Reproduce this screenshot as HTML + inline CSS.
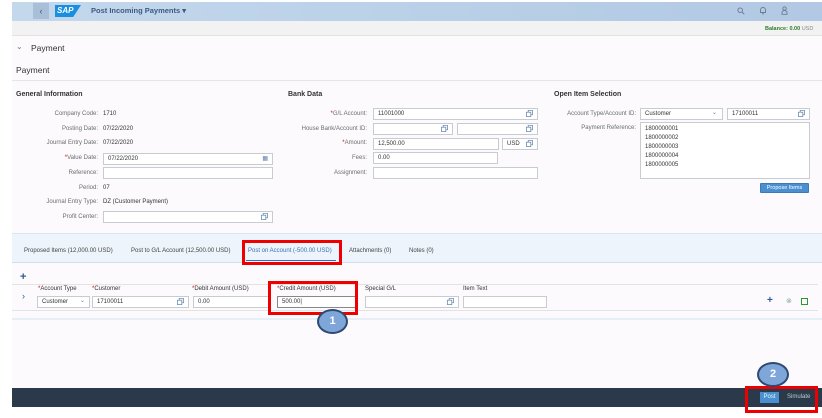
<!DOCTYPE html>
<html><head><meta charset="utf-8">
<style>
*{margin:0;padding:0;box-sizing:border-box}
body{width:822px;height:418px;background:#fff;position:relative;overflow:hidden;font-family:"Liberation Sans",sans-serif;color:#333}
.a{position:absolute;white-space:nowrap}
.l{font-size:6px;color:#6a6d70;text-align:right}
.v{font-size:6px;color:#333}
.in{position:absolute;height:12px;background:#fff;border:1px solid #c8ccd0;font-size:6px;padding:2px 4px;color:#333}
.r{color:#d00}
.t{font-size:7px;font-weight:bold;color:#333}
.red{position:absolute;border:3px solid #e00}
.circ{position:absolute;background:#7fa6d8;border:2px solid #2e4a73;border-radius:50%;color:#fff;font-weight:bold;font-size:11px;text-align:center}
.vh{position:absolute;right:4px;top:1px;width:7px;height:7px}
</style></head><body>
<svg width="0" height="0" style="position:absolute"><defs><symbol id="vh" viewBox="0 0 8 8"><rect x="0.5" y="2.5" width="5" height="5" fill="none" stroke="#5a7fa8" stroke-width="0.8"/><path d="M2.5 2.5V0.5H7.5V5.5H5.5" fill="none" stroke="#5a7fa8" stroke-width="0.8"/></symbol></defs></svg>
<!-- header -->
<div class="a" style="left:12px;top:2px;width:810px;height:19px;background:linear-gradient(90deg,#c4d8ec,#b8cfe7 60%,#b2c8e4)"></div>
<div class="a" style="left:33px;top:3px;width:16px;height:16px;background:#a9bfd8;color:#3a5a80;font-size:9px;text-align:center;line-height:16px">&lsaquo;</div>
<div class="a" style="left:55px;top:5px;width:26px;height:12px;background:#1a8fe0;clip-path:polygon(0 0,100% 0,70% 100%,0 100%);color:#fff;font-weight:bold;font-size:8px;line-height:12px;padding-left:2px;font-style:italic">SAP</div>
<div class="a" style="left:91px;top:6px;font-size:7.5px;font-weight:bold;color:#3a5a80">Post Incoming Payments ▾</div>
<svg class="a" style="left:737px;top:7px" width="8" height="8" viewBox="0 0 8 8"><circle cx="3.2" cy="3.2" r="2.3" fill="none" stroke="#6a7c90" stroke-width="0.9"/><path d="M5 5L7.3 7.3" stroke="#6a7c90" stroke-width="0.9"/></svg>
<svg class="a" style="left:759px;top:6px" width="8" height="9" viewBox="0 0 8 9"><path d="M1.5 6.5V4a2.5 2.5 0 0 1 5 0V6.5H1ZM3 7.8h2" fill="none" stroke="#6a7c90" stroke-width="0.9"/></svg>
<svg class="a" style="left:781px;top:6px" width="7" height="9" viewBox="0 0 7 9"><circle cx="3.5" cy="2.5" r="1.7" fill="none" stroke="#6a7c90" stroke-width="0.9"/><path d="M1 8.3V6.5a2.5 2 0 0 1 5 0V8.3Z" fill="none" stroke="#6a7c90" stroke-width="0.9"/></svg>
<!-- subheader -->
<div class="a" style="left:12px;top:21px;width:810px;height:15px;background:#f2f2f2;border-bottom:1px solid #e3e3e3"></div>
<div class="a" style="left:765px;top:26px;font-size:5.5px;font-weight:bold;color:#2b7d2b">Balance: 0.00 <span style="font-weight:normal;color:#888">USD</span></div>
<!-- content bg -->
<div class="a" style="left:12px;top:36px;width:810px;height:352px;background:#fcfafd"></div>
<div class="a" style="left:16px;top:42px;font-size:8px;color:#5a7fa8">&#8964;</div>
<div class="a" style="left:31px;top:43px;font-size:8.5px;color:#333">Payment</div>
<div class="a" style="left:16px;top:65px;font-size:8.5px;color:#333">Payment</div>
<div class="a" style="left:12px;top:80px;width:810px;height:1px;background:#e5e5e8"></div>
<div class="a t" style="left:16px;top:91px">General Information</div>
<div class="a t" style="left:288px;top:91px">Bank Data</div>
<div class="a t" style="left:554px;top:91px">Open Item Selection</div>
<!-- general info -->
<div class="a l" style="right:724px;top:111px">Company Code:</div><div class="a v" style="left:103px;top:111px">1710</div>
<div class="a l" style="right:724px;top:126px">Posting Date:</div><div class="a v" style="left:103px;top:126px">07/22/2020</div>
<div class="a l" style="right:724px;top:140px">Journal Entry Date:</div><div class="a v" style="left:103px;top:140px">07/22/2020</div>
<div class="a l" style="right:724px;top:155px"><span class="r">*</span>Value Date:</div>
<div class="in" style="left:103px;top:153px;width:170px">07/22/2020<span style="position:absolute;right:4px;top:1px;color:#5a7fa8">▦</span></div>
<div class="a l" style="right:724px;top:170px">Reference:</div>
<div class="in" style="left:103px;top:167px;width:170px"></div>
<div class="a l" style="right:724px;top:185px">Period:</div><div class="a v" style="left:103px;top:185px">07</div>
<div class="a l" style="right:724px;top:199px">Journal Entry Type:</div><div class="a v" style="left:103px;top:199px">DZ (Customer Payment)</div>
<div class="a l" style="right:724px;top:214px">Profit Center:</div>
<div class="in" style="left:103px;top:211px;width:170px"><svg class="vh"><use href="#vh"/></svg></div>
<!-- bank -->
<div class="a l" style="right:455px;top:111px"><span class="r">*</span>G/L Account:</div>
<div class="in" style="left:373px;top:108px;width:165px">11001000<svg class="vh"><use href="#vh"/></svg></div>
<div class="a l" style="right:455px;top:126px">House Bank/Account ID:</div>
<div class="in" style="left:373px;top:123px;width:80px"><svg class="vh"><use href="#vh"/></svg></div>
<div class="in" style="left:457px;top:123px;width:81px"><svg class="vh"><use href="#vh"/></svg></div>
<div class="a l" style="right:455px;top:140px"><span class="r">*</span>Amount:</div>
<div class="in" style="left:373px;top:138px;width:126px">12,500.00</div>
<div class="in" style="left:502px;top:138px;width:36px">USD<svg class="vh"><use href="#vh"/></svg></div>
<div class="a l" style="right:455px;top:155px">Fees:</div>
<div class="in" style="left:373px;top:152px;width:125px">0.00</div>
<div class="a l" style="right:455px;top:170px">Assignment:</div>
<div class="in" style="left:373px;top:167px;width:165px"></div>
<!-- open item -->
<div class="a l" style="right:186px;top:111px">Account Type/Account ID:</div>
<div class="in" style="left:640px;top:108px;width:83px">Customer<span style="position:absolute;right:5px;top:0;color:#5a7fa8">&#8964;</span></div>
<div class="in" style="left:727px;top:108px;width:83px">17100011<svg class="vh"><use href="#vh"/></svg></div>
<div class="a l" style="right:186px;top:125px">Payment Reference:</div>
<div class="in" style="left:640px;top:122px;width:170px;height:57px;line-height:9px">1800000001<br>1800000002<br>1800000003<br>1800000004<br>1800000005</div>
<div class="a" style="left:760px;top:183px;width:49px;height:10px;background:#4a90d0;border:1px solid #3a7ab8;color:#fff;font-size:5.5px;text-align:center;line-height:8px;border-radius:1px">Propose Items</div>
<!-- tabs -->
<div class="a" style="left:12px;top:233px;width:810px;height:30px;background:#eef4fb;border-top:1px solid #dde6f0;border-bottom:1px solid #d4dfec"></div>
<div class="a v" style="left:24px;top:248px;color:#444">Proposed Items (12,000.00 USD)</div>
<div class="a v" style="left:131px;top:248px;color:#444">Post to G/L Account (12,500.00 USD)</div>
<div class="a v" style="left:248px;top:248px;color:#3a70b8">Post on Account (-500.00 USD)</div>
<div class="a" style="left:246px;top:260px;width:90px;height:1px;background:#3a70b8"></div>
<div class="a v" style="left:349px;top:248px;color:#444">Attachments (0)</div>
<div class="a v" style="left:409px;top:248px;color:#444">Notes (0)</div>
<!-- table -->
<div class="a" style="left:20px;top:271px;font-size:11px;color:#2e5c94;font-weight:bold">+</div>
<div class="a" style="left:12px;top:284px;width:806px;height:1px;background:#e3e3e3"></div>
<div class="a v" style="left:38px;top:286px"><span class="r">*</span>Account Type</div>
<div class="a v" style="left:92px;top:286px"><span class="r">*</span>Customer</div>
<div class="a v" style="left:192px;top:286px"><span class="r">*</span>Debit Amount (USD)</div>
<div class="a v" style="left:277px;top:286px"><span class="r">*</span>Credit Amount (USD)</div>
<div class="a v" style="left:365px;top:286px">Special G/L</div>
<div class="a v" style="left:463px;top:286px">Item Text</div>
<div class="a" style="left:22px;top:291px;font-size:9px;color:#2e5c94">›</div>
<div class="in" style="left:37px;top:296px;width:53px">Customer<span style="position:absolute;right:4px;top:0;color:#5a7fa8">&#8964;</span></div>
<div class="in" style="left:92px;top:296px;width:97px">17100011<svg class="vh"><use href="#vh"/></svg></div>
<div class="in" style="left:193px;top:296px;width:78px">0.00</div>
<div class="in" style="left:277px;top:296px;width:80px;border-color:#888">500.00|</div>
<div class="in" style="left:365px;top:296px;width:94px"><svg class="vh"><use href="#vh"/></svg></div>
<div class="in" style="left:463px;top:296px;width:84px"></div>
<div class="a" style="left:767px;top:295px;font-size:10px;color:#2e5c94;font-weight:bold">+</div>
<div class="a" style="left:786px;top:297px;font-size:7px;color:#8aa">⊗</div>
<div class="a" style="left:801px;top:298px;width:7px;height:7px;border:1.5px solid #2b9a2b"></div>
<div class="a" style="left:12px;top:310px;width:806px;height:1px;background:#e3e3e3"></div>
<div class="a" style="left:12px;top:318px;width:810px;height:2px;background:#e6eef7"></div>
<!-- footer -->
<div class="a" style="left:12px;top:388px;width:810px;height:19px;background:#2a3a4a"></div>
<div class="a" style="left:760px;top:392px;width:19px;height:11px;background:#4a90d0;color:#dfe;font-size:6px;text-align:center;line-height:11px">Post</div>
<div class="a" style="left:787px;top:394px;font-size:6px;color:#bcc">Simulate</div>
<!-- annotations -->
<div class="red" style="left:242px;top:240px;width:100px;height:25px"></div>
<div class="red" style="left:268px;top:281px;width:90px;height:34px"></div>
<div class="circ" style="left:317px;top:309px;width:31px;height:25px;line-height:21px">1</div>
<div class="red" style="left:745px;top:386px;width:73px;height:27px"></div>
<div class="circ" style="left:757px;top:362px;width:32px;height:25px;line-height:21px">2</div>
</body></html>
